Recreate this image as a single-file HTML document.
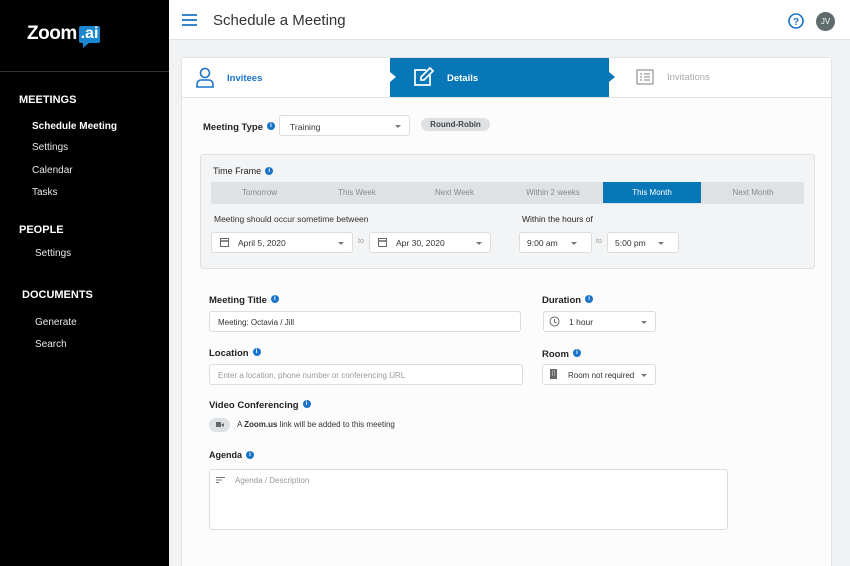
<!DOCTYPE html><html style="overflow:hidden;height:566px"><head><style>
*{box-sizing:border-box;margin:0;padding:0}
body{width:850px;height:566px;overflow:hidden;font-family:"Liberation Sans",sans-serif;background:#f1f2f3;position:relative;color:#222}
.a{position:absolute}
.sb{left:0;top:0;width:169px;height:566px;background:#000;color:#fff}
.sb .h{position:absolute;font-weight:bold;font-size:11px;color:#fff}
.sb .i{position:absolute;font-size:10px;color:#e8e8e8}
.hdr{left:169px;top:0;width:681px;height:40px;background:#fff;border-bottom:1px solid #e2e2e2}
.card{left:181px;top:57px;width:651px;height:515px;background:#fcfcfc;border:1px solid #e3e3e3;border-radius:3px}
.lbl{position:absolute;font-size:9.5px;font-weight:bold;color:#222}
.info{display:inline-block;width:8px;height:8px;border-radius:50%;background:#1a73c8;color:#fff;font-size:6px;line-height:8px;text-align:center;vertical-align:middle;margin-left:4px;font-weight:bold;position:relative;top:-1px}
.inp{position:absolute;background:#fff;border:1px solid #dcdcdc;border-radius:3px;font-size:9px;color:#333}
.car{position:absolute;right:8px;top:50%;margin-top:-1px;border-left:3px solid transparent;border-right:3px solid transparent;border-top:3px solid #777}
.tab{position:absolute;top:0;height:21px;line-height:21px;text-align:center;font-size:8px;color:#888;background:#dfe2e5}
</style></head><body>
<div class="a sb">
<div class="a" style="left:27px;top:23px;font-size:19px;font-weight:bold;letter-spacing:-0.5px">Zoom</div>
<div class="a" style="left:79px;top:26px;width:21px;height:17px;background:#1a86d0;color:#fff;font-size:16px;font-weight:bold;line-height:15px;text-align:center;border-radius:2px">.ai</div>
<div class="a" style="left:83px;top:43px;border-left:6px solid #1a86d0;border-bottom:5px solid transparent"></div>
<div class="a" style="left:0;top:71px;width:169px;height:1px;background:#333"></div>
<div class="h" style="left:19px;top:94px">MEETINGS</div>
<div class="i" style="left:32px;top:121px;font-weight:bold;color:#fff">Schedule Meeting</div>
<div class="i" style="left:32px;top:142px">Settings</div>
<div class="i" style="left:32px;top:165px">Calendar</div>
<div class="i" style="left:32px;top:187px">Tasks</div>
<div class="h" style="left:19px;top:224px">PEOPLE</div>
<div class="i" style="left:35px;top:248px">Settings</div>
<div class="h" style="left:22px;top:289px">DOCUMENTS</div>
<div class="i" style="left:35px;top:317px">Generate</div>
<div class="i" style="left:35px;top:339px">Search</div>
</div>
<div class="a hdr">
<svg class="a" style="left:13px;top:14px" width="15" height="12"><path d="M0 1h15M0 6h15M0 11h15" stroke="#1a73c8" stroke-width="1.8"/></svg>
<div class="a" style="left:44px;top:12px;font-size:15px;color:#333">Schedule a Meeting</div>
<svg class="a" style="left:619px;top:13px" width="16" height="16"><circle cx="8" cy="8" r="7" fill="none" stroke="#1a73c8" stroke-width="1.6"/><text x="8" y="12" font-size="10" font-weight="bold" text-anchor="middle" fill="#1a73c8" font-family="Liberation Sans">?</text></svg>
<div class="a" style="left:647px;top:12px;width:19px;height:19px;border-radius:50%;background:#5f6b6d;color:#fff;font-size:8px;line-height:19px;text-align:center">JV</div>
</div>
<div class="a card">
<div class="a" style="left:0;top:0;width:649px;height:40px;background:#fff;border-bottom:1px solid #e3e3e3"></div>
<svg class="a" style="left:13px;top:9px" width="20" height="21"><circle cx="10" cy="6" r="4.5" fill="none" stroke="#1a73c8" stroke-width="1.6"/><path d="M2 20v-3a4 4 0 0 1 4-4h8a4 4 0 0 1 4 4v3z" fill="none" stroke="#1a73c8" stroke-width="1.6"/></svg>
<div class="a" style="left:45px;top:15px;font-size:9.5px;font-weight:bold;color:#1a73c8">Invitees</div>
<div class="a" style="left:208px;top:0;width:219px;height:39px;background:#0877b8"></div>
<div class="a" style="left:208px;top:14px;border-left:6px solid #fff;border-top:5px solid transparent;border-bottom:5px solid transparent"></div>
<div class="a" style="left:427px;top:14px;border-left:6px solid #0877b8;border-top:5px solid transparent;border-bottom:5px solid transparent"></div>
<svg class="a" style="left:230px;top:8px" width="22" height="22"><path d="M14 4H3v15h15V9" fill="none" stroke="#fff" stroke-width="1.7"/><path d="M18 2l3 3-9 9H9v-3z" fill="none" stroke="#fff" stroke-width="1.7"/></svg>
<div class="a" style="left:265px;top:15px;font-size:9.5px;font-weight:bold;color:#fff">Details</div>
<svg class="a" style="left:454px;top:11px" width="18" height="16"><rect x="1" y="1" width="16" height="14" fill="none" stroke="#999" stroke-width="1.3"/><path d="M4 5h2M8 5h6M4 8h2M8 8h6M4 11h2M8 11h6" stroke="#999" stroke-width="1.3"/></svg>
<div class="a" style="left:485px;top:14px;font-size:9.5px;color:#aaa">Invitations</div>

<div class="lbl" style="left:21px;top:64px">Meeting Type<span class="info">i</span></div>
<div class="inp" style="left:97px;top:57px;width:131px;height:21px;padding:6px 10px;font-size:8.5px">Training<span class="car"></span></div>
<div class="a" style="left:239px;top:60px;width:69px;height:13px;border-radius:7px;background:#dde1e4;font-size:8px;font-weight:bold;color:#444;text-align:center;line-height:13px">Round-Robin</div>

<div class="a" style="left:18px;top:96px;width:615px;height:115px;background:#f3f4f5;border:1px solid #e0e0e0;border-radius:3px">
<div class="lbl" style="left:12px;top:11px;font-weight:normal;font-size:9px">Time Frame<span class="info">i</span></div>
<div class="a" style="left:10px;top:27px;width:593px;height:22px;background:#dfe2e5;border-radius:2px">
<div class="tab" style="left:0;width:97px">Tomorrow</div>
<div class="tab" style="left:98px;width:96px">This Week</div>
<div class="tab" style="left:195px;width:97px">Next Week</div>
<div class="tab" style="left:293px;width:98px">Within 2 weeks</div>
<div class="tab" style="left:392px;width:98px;background:#0877b8;color:#fff">This Month</div>
<div class="tab" style="left:491px;width:102px">Next Month</div>
</div>
<div class="a" style="left:13px;top:59px;font-size:8.5px;color:#333">Meeting should occur sometime between</div>
<div class="a" style="left:321px;top:59px;font-size:8.5px;color:#222">Within the hours of</div>
<div class="inp" style="left:10px;top:77px;width:142px;height:21px;padding:5px 0 0 26px;font-size:8.5px">April 5, 2020<span class="car"></span></div>
<div class="a" style="left:157px;top:83px;font-size:7px;color:#999">to</div>
<div class="inp" style="left:168px;top:77px;width:122px;height:21px;padding:5px 0 0 26px;font-size:8.5px">Apr 30, 2020<span class="car"></span></div>
<svg class="a" style="left:19px;top:82px" width="9" height="10"><rect x="0.5" y="1.5" width="8" height="8" fill="none" stroke="#666"/><path d="M0 4h9" stroke="#666" stroke-width="1.5"/></svg>
<svg class="a" style="left:177px;top:82px" width="9" height="10"><rect x="0.5" y="1.5" width="8" height="8" fill="none" stroke="#666"/><path d="M0 4h9" stroke="#666" stroke-width="1.5"/></svg>
<div class="inp" style="left:318px;top:77px;width:73px;height:21px;padding:5px 0 0 7px;font-size:8.5px">9:00 am<span class="car" style="right:14px"></span></div>
<div class="a" style="left:395px;top:83px;font-size:7px;color:#999">to</div>
<div class="inp" style="left:406px;top:77px;width:72px;height:21px;padding:5px 0 0 7px;font-size:8.5px">5:00 pm<span class="car" style="right:14px"></span></div>
</div>

<div class="lbl" style="left:27px;top:237px">Meeting Title<span class="info">i</span></div>
<div class="inp" style="left:27px;top:253px;width:312px;height:21px;padding:6px 8px;font-size:8px">Meeting: Octavia / Jill</div>
<div class="lbl" style="left:360px;top:237px">Duration<span class="info">i</span></div>
<div class="inp" style="left:361px;top:253px;width:113px;height:21px;padding:5px 0 0 25px;font-size:8.5px">1 hour<span class="car"></span></div>
<svg class="a" style="left:367px;top:258px" width="11" height="11"><circle cx="5.5" cy="5.5" r="4.5" fill="none" stroke="#666"/><path d="M5.5 3v3l2 1" fill="none" stroke="#666"/></svg>
<div class="lbl" style="left:27px;top:290px">Location<span class="info">i</span></div>
<div class="inp" style="left:27px;top:306px;width:314px;height:21px;padding:6px 8px;font-size:8px;color:#999">Enter a location, phone number or conferencing URL</div>
<div class="lbl" style="left:360px;top:291px">Room<span class="info">i</span></div>
<div class="inp" style="left:360px;top:306px;width:114px;height:21px;padding:6px 0 0 25px;font-size:8px">Room not required<span class="car"></span></div>
<svg class="a" style="left:368px;top:311px" width="7" height="10"><rect x="0" y="0" width="7" height="10" fill="#666"/><path d="M2 2h1M4 2h1M2 4h1M4 4h1M2 6h1M4 6h1" stroke="#fff" stroke-width="0.8"/></svg>
<div class="lbl" style="left:27px;top:342px">Video Conferencing<span class="info">i</span></div>
<div class="a" style="left:27px;top:360px;width:21px;height:14px;border-radius:7px;background:#dde1e4"></div>
<div class="a" style="left:34px;top:364px;width:5px;height:5px;background:#666"></div>
<div class="a" style="left:39px;top:365px;border-right:3px solid #666;border-top:2px solid transparent;border-bottom:2px solid transparent"></div>
<div class="a" style="left:55px;top:362px;font-size:8px;color:#333">A <b>Zoom.us</b> link will be added to this meeting</div>
<div class="lbl" style="left:27px;top:392px;font-size:9px">Agenda<span class="info">i</span></div>
<div class="inp" style="left:27px;top:411px;width:519px;height:61px;padding:6px 0 0 25px;font-size:8px;color:#999">Agenda / Description</div>
<svg class="a" style="left:34px;top:419px" width="9" height="6"><path d="M0 .5h9M0 3h6M0 5.5h3" stroke="#777"/></svg>
</div>
</body></html>
